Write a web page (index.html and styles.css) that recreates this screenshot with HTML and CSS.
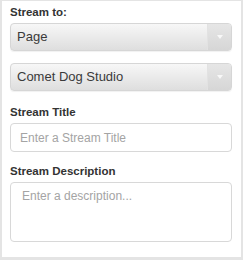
FILE: index.html
```html
<!DOCTYPE html>
<html>
    <head>
        <title>Stream settings</title>
        <link rel="stylesheet" href="styles.css">
    </head>
    <body>
        <div class="panel">
            <div class="label">Stream to:</div>
            <div class="picker first">
                <span class="picker_text">Page</span>
                <span class="picker_arrow"><span class="tri"></span></span>
            </div>
            <div class="picker second">
                <span class="picker_text">Comet Dog Studio</span>
                <span class="picker_arrow"><span class="tri"></span></span>
            </div>

            <div class="label">Stream Title</div>
            <input class="field" type="text" placeholder="Enter a Stream Title">

            <div class="label">Stream Description</div>
            <textarea class="field area" placeholder="Enter a description..."></textarea>
        </div>
    </body>
</html>
```

FILE: styles.css
```css
html, body {
    margin: 0;
    padding: 0;
}

body {
    background: #e4e4e4;
    width: 243px;
    height: 260px;
    overflow: hidden;
    font-family: 'Liberation Sans', Arial, sans-serif;
    color: #333333;
}

.panel {
    margin: 1px 2px 0 2px;
    height: 256px;
    box-sizing: border-box;
    background: #ffffff;
    padding: 4px 9px 0 8px;
}

.label {
    font-size: 11.5px;
    font-weight: 700;
    line-height: 15px;
    color: #333333;
    margin-bottom: 3px;
}

.picker {
    display: flex;
    height: 28px;
    box-sizing: border-box;
    border: 1px solid #d6d6d6;
    border-radius: 4px;
    background: linear-gradient(#f7f7f7, #dedede);
    box-shadow: 0 1px 1px rgba(0,0,0,0.06);
}

.picker.first {
    margin-bottom: 12px;
}

.picker.second {
    margin-bottom: 14px;
}

.picker_text {
    flex: 1;
    font-size: 13px;
    line-height: 26px;
    padding-left: 6px;
    color: #3a3a3a;
}

.picker_arrow {
    width: 23px;
    display: flex;
    align-items: center;
    justify-content: center;
    border-left: 1px solid #e2e2e2;
    background: linear-gradient(#e6e6e6, #d6d6d6);
    border-radius: 0 3px 3px 0;
}

.tri {
    width: 0;
    height: 0;
    border-left: 3px solid transparent;
    border-right: 3px solid transparent;
    border-top: 4px solid #f8f8f8;
}

.field {
    display: block;
    width: 100%;
    height: 29px;
    box-sizing: border-box;
    border: 1px solid #d8d8d8;
    border-radius: 4px;
    padding: 0 9px;
    margin: 0 0 12px 0;
    font-family: 'Liberation Sans', Arial, sans-serif;
    font-size: 12px;
    color: #333333;
    background: #ffffff;
    outline: none;
}

.field::placeholder {
    color: #a4a4a4;
}

.area {
    height: 60px;
    padding: 6px 11px;
    resize: none;
    margin-top: 2px;
}
```
